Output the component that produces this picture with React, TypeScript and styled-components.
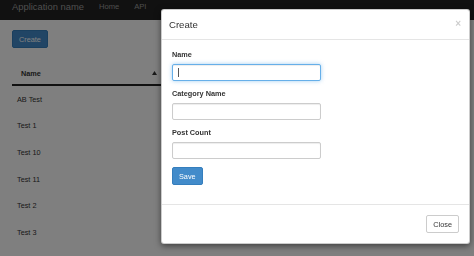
import React from 'react';
import styled, {createGlobalStyle} from 'styled-components';

const GlobalStyle = createGlobalStyle`
  html, body {
    margin: 0;
    padding: 0;
    background: #fff;
    height: 256px;
    overflow: hidden;
    font-family: "Liberation Sans", Arial, sans-serif;
    color: #333;
  }
`;

const Navbar = styled.div`
  height: 20px;
  background: #222;
  display: flex;
  align-items: flex-start;
  gap: 15px;
  padding: 1px 12px 0;
  box-sizing: border-box;
`;

const Brand = styled.span`
  font-size: 9.4px;
  line-height: 12px;
  color: #9d9d9d;
`;

const NavLink = styled.span`
  font-size: 7.6px;
  line-height: 12px;
  color: #9d9d9d;
`;

const Container = styled.div`
  padding: 0 12px;
`;

const PrimaryButton = styled.button`
  display: block;
  height: 18px;
  padding: 0 6px;
  margin: ${p => p.$top || 0}px 0 0;
  background: #428bca;
  border: 1px solid #357ebd;
  border-radius: 2px;
  color: #fff;
  font-family: inherit;
  font-size: 7.3px;
`;

const Table = styled.div`
  margin-top: 14px;
  display: grid;
  grid-template-columns: 150px 1fr;
`;

const HeadCell = styled.div`
  height: 22px;
  border-bottom: 2px solid #222;
  display: flex;
  align-items: center;
  justify-content: space-between;
  padding: 0 5px 0 9px;
  font-size: 7.3px;
  font-weight: bold;
`;

const Cell = styled.div`
  height: 26.6px;
  display: flex;
  align-items: center;
  padding-left: 5px;
  font-size: 7.3px;
`;

const Backdrop = styled.div`
  position: fixed;
  inset: 0;
  background: rgba(0, 0, 0, 0.5);
`;

const Dialog = styled.div`
  position: absolute;
  top: 9px;
  left: 161px;
  width: 309px;
  background: #fff;
  border: 1px solid rgba(0, 0, 0, 0.2);
  border-radius: 3px;
  box-shadow: 0 2px 6px rgba(0, 0, 0, 0.5);
  box-sizing: border-box;
`;

const DialogHeader = styled.div`
  height: 30px;
  border-bottom: 1px solid #e5e5e5;
  box-sizing: border-box;
  display: flex;
  align-items: center;
  justify-content: space-between;
  padding: 0 8px 0 7px;
`;

const Title = styled.span`
  font-size: 9.6px;
  color: #333;
`;

const CloseX = styled.span`
  font-size: 10px;
  font-weight: bold;
  color: #000;
  opacity: 0.2;
  margin-top: -3px;
`;

const DialogBody = styled.div`
  padding: 10px 10px 19px;
`;

const Group = styled.div`
  margin-bottom: 8px;
`;

const Label = styled.label`
  display: block;
  font-size: 7.3px;
  line-height: 10px;
  font-weight: bold;
  margin-bottom: 4px;
`;

const InputWrap = styled.div`
  position: relative;
  width: 149px;
`;

const Input = styled.input`
  display: block;
  width: 149px;
  height: 17px;
  box-sizing: border-box;
  border: 1px solid ${p => (p.$focused ? '#66afe9' : '#ccc')};
  border-radius: 2px;
  outline: none;
  box-shadow: inset 0 1px 1px rgba(0, 0, 0, 0.075)
    ${p => (p.$focused ? ', 0 0 4px rgba(102, 175, 233, 0.6)' : '')};
  font-size: 7.3px;
  padding: 0 6px;
`;

const Caret = styled.span`
  position: absolute;
  left: 6px;
  top: 4px;
  width: 1px;
  height: 9px;
  background: #555;
`;

const DialogFooter = styled.div`
  border-top: 1px solid #e5e5e5;
  padding: 10px;
  display: flex;
  justify-content: flex-end;
`;

const DefaultButton = styled.button`
  height: 18px;
  padding: 0 6px;
  background: #fff;
  border: 1px solid #ccc;
  border-radius: 2px;
  color: #333;
  font-family: inherit;
  font-size: 7.3px;
`;

const SortArrow = () => (
  <svg width="5" height="4" viewBox="0 0 5 4">
    <path d="M2.5 0 L5 4 L0 4 Z" fill="#333"/>
  </svg>
);

const rows = ['AB Test', 'Test 1', 'Test 10', 'Test 11', 'Test 2', 'Test 3'];

const fields = ['Name', 'Category Name', 'Post Count'];

export default function App() {
  return <>
    <GlobalStyle/>
    <Navbar>
      <Brand>Application name</Brand>
      <NavLink>Home</NavLink>
      <NavLink>API</NavLink>
    </Navbar>
    <Container>
      <PrimaryButton $top={10}>Create</PrimaryButton>
      <Table>
        <HeadCell>Name <SortArrow/></HeadCell>
        <HeadCell/>
        {rows.map(name => <React.Fragment key={name}>
          <Cell>{name}</Cell>
          <Cell/>
        </React.Fragment>)}
      </Table>
    </Container>
    <Backdrop/>
    <Dialog>
      <DialogHeader>
        <Title>Create</Title>
        <CloseX>×</CloseX>
      </DialogHeader>
      <DialogBody>
        {fields.map((field, idx) =>
          <Group key={field}>
            <Label>{field}</Label>
            <InputWrap>
              <Input type="text" $focused={idx === 0} readOnly/>
              {idx === 0 && <Caret/>}
            </InputWrap>
          </Group>)}
        <PrimaryButton>Save</PrimaryButton>
      </DialogBody>
      <DialogFooter>
        <DefaultButton>Close</DefaultButton>
      </DialogFooter>
    </Dialog>
  </>;
}
